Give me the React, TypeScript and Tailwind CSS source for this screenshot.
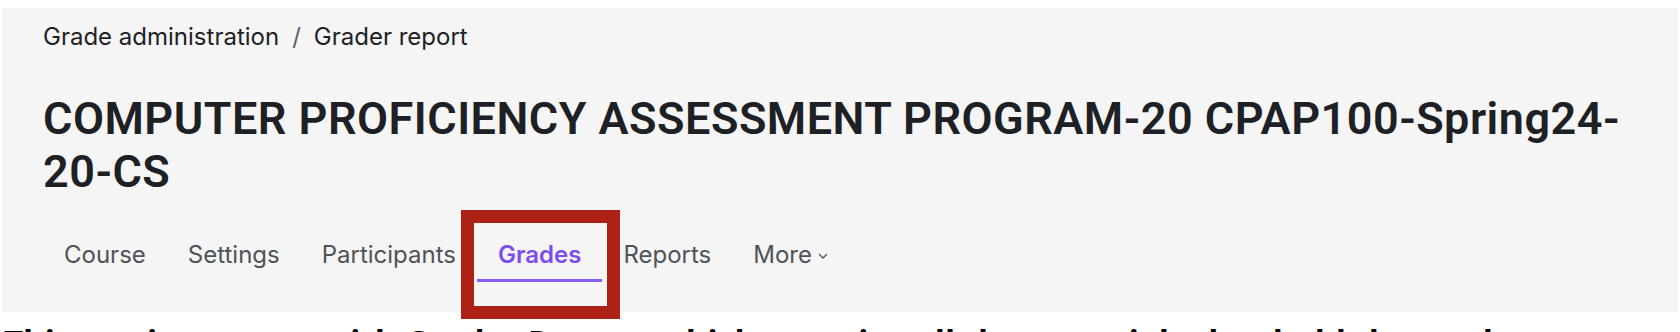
import React from 'react';

const navItems = ['Course', 'Settings', 'Participants', 'Grades', 'Reports', 'More'];

const ChevronDown: React.FC = () => (
  <svg width="12" height="12" viewBox="0 0 12 12" fill="none" className="ml-[5px] mt-[3px]">
    <path d="M2.5 4.5 L6 8 L9.5 4.5" stroke="currentColor" strokeWidth="1.3" strokeLinecap="round" strokeLinejoin="round" />
  </svg>
);

const App: React.FC = () => {
  return (
    <div className="h-[332px] w-full overflow-hidden bg-white pt-[8px] px-[2px]">
      {/* page header */}
      <div className="h-[304px] bg-[#f5f5f5] pl-[41px] pr-[40px] pt-[12px] font-['Inter',sans-serif] text-[#1d2125]">
        <nav className="flex items-center text-[24px] leading-[33px]">
          <span>Grade administration</span>
          <span className="mx-[13px] text-[#5b5f63]">/</span>
          <span>Grader report</span>
        </nav>

        <h1 className="mt-[39px] font-['Roboto',sans-serif] text-[45px] font-semibold leading-[53px] tracking-[0.5px]">
          COMPUTER PROFICIENCY ASSESSMENT PROGRAM-20 CPAP100-Spring24-20-CS
        </h1>

        <ul className="mt-[32px] flex text-[24px] leading-[33px]">
          {navItems.map((item) => {
            const active = item === 'Grades';
            return (
              <li key={item} className="relative">
                <span
                  className={
                    active
                      ? 'flex items-center border-b-[3px] border-[#8b5cf6] px-[21px] pt-[8px] pb-[8px] font-semibold text-[#7c4dea]'
                      : 'flex items-center border-b-[3px] border-transparent px-[21px] pt-[8px] pb-[8px] text-[#4f5357]'
                  }
                >
                  {item}
                  {item === 'More' && <ChevronDown />}
                </span>
                {active && (
                  <div className="pointer-events-none absolute -left-[16px] -right-[18px] -top-[20px] -bottom-[37px] z-10 border-[13px] border-[#ae2216]" />
                )}
              </li>
            );
          })}
        </ul>
      </div>

      <p className="mt-[13px] px-[2px] whitespace-nowrap font-['Open_Sans',sans-serif] text-[33px] font-bold leading-[33px] text-black">
        This section comes with Grader Report, which contains all the materials that hold the grades
      </p>
    </div>
  );
};

export default App;
